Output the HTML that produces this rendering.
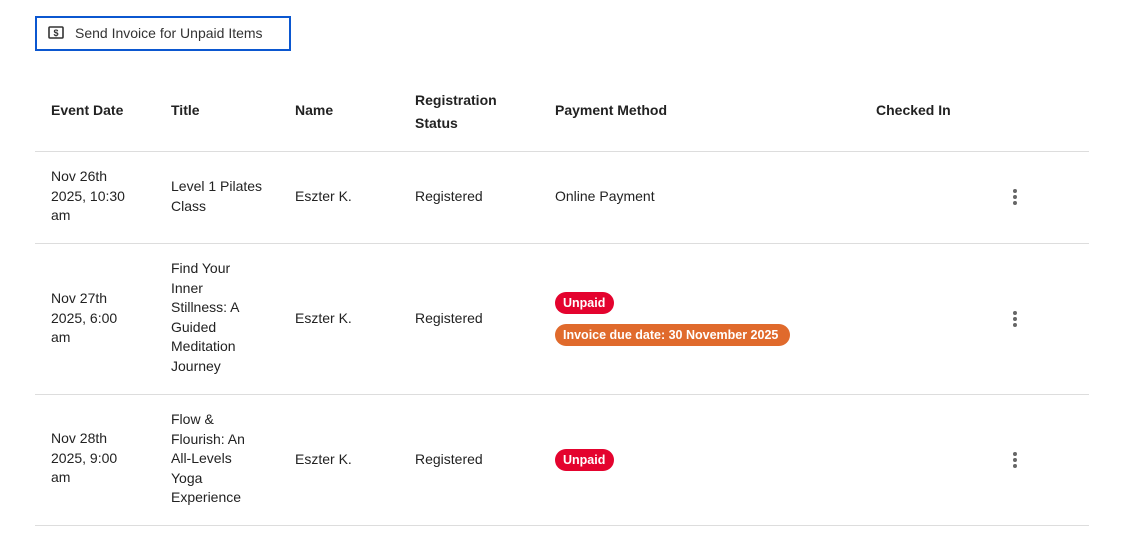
<!DOCTYPE html>
<html><head><style>
body{margin:0;width:1126px;height:556px;background:#fff;font-family:"Liberation Sans",sans-serif;font-size:14px;color:#222;position:relative;overflow:hidden}
.a{position:absolute}
.btn{left:35px;top:16px;width:252px;height:31px;border:2px solid #0b57d0;}
.btn span{position:absolute;left:38px;top:7px;font-size:14px;color:#333}
.h{font-weight:bold;color:#222}
.l{position:absolute;left:35px;width:1054px;height:1px;background:#ddd}
.c{line-height:19.5px}
.k{position:absolute;left:1013px;width:4px}
.k i{display:block;width:4px;height:4px;border-radius:2px;background:#666;margin-bottom:2px}
.b{position:absolute;left:555px;height:22px;border-radius:11px;color:#fff;font-size:12.5px;font-weight:bold;line-height:22px;padding:0 8px;box-sizing:border-box;white-space:nowrap;overflow:hidden}
</style></head><body>
<div class="a btn">
<svg class="a" style="left:11px;top:8px" width="16" height="13" viewBox="0 0 16 13"><rect x="1" y="1" width="14" height="11" rx="1" fill="none" stroke="#333" stroke-width="1.6"/><text x="8" y="10" font-size="9" font-weight="bold" text-anchor="middle" fill="#333" font-family="Liberation Sans">$</text></svg>
<span>Send Invoice for Unpaid Items</span></div>

<div class="a h" style="left:51px;top:102px">Event Date</div>
<div class="a h" style="left:171px;top:102px">Title</div>
<div class="a h" style="left:295px;top:102px">Name</div>
<div class="a h c" style="left:415px;top:89px;line-height:23px">Registration<br>Status</div>
<div class="a h" style="left:555px;top:102px">Payment Method</div>
<div class="a h" style="left:876px;top:102px">Checked In</div>
<div class="l" style="top:151px"></div>

<div class="a c" style="left:51px;top:167px">Nov 26th<br>2025, 10:30<br>am</div>
<div class="a c" style="left:171px;top:177px">Level 1 Pilates<br>Class</div>
<div class="a" style="left:295px;top:188px">Eszter K.</div>
<div class="a" style="left:415px;top:188px">Registered</div>
<div class="a" style="left:555px;top:188px">Online Payment</div>
<div class="k" style="top:189px"><i></i><i></i><i></i></div>
<div class="l" style="top:243px"></div>

<div class="a c" style="left:51px;top:289px">Nov 27th<br>2025, 6:00<br>am</div>
<div class="a c" style="left:171px;top:259px">Find Your<br>Inner<br>Stillness: A<br>Guided<br>Meditation<br>Journey</div>
<div class="a" style="left:295px;top:310px">Eszter K.</div>
<div class="a" style="left:415px;top:310px">Registered</div>
<div class="b" style="top:292px;width:59px;background:#e4032e">Unpaid</div>
<div class="b" style="top:324px;width:235px;background:#e06a2c">Invoice due date: 30 November 2025</div>
<div class="k" style="top:311px"><i></i><i></i><i></i></div>
<div class="l" style="top:394px"></div>

<div class="a c" style="left:51px;top:429px">Nov 28th<br>2025, 9:00<br>am</div>
<div class="a c" style="left:171px;top:410px">Flow &amp;<br>Flourish: An<br>All-Levels<br>Yoga<br>Experience</div>
<div class="a" style="left:295px;top:451px">Eszter K.</div>
<div class="a" style="left:415px;top:451px">Registered</div>
<div class="b" style="top:449px;width:59px;background:#e4032e">Unpaid</div>
<div class="k" style="top:452px"><i></i><i></i><i></i></div>
<div class="l" style="top:525px"></div>
</body></html>
